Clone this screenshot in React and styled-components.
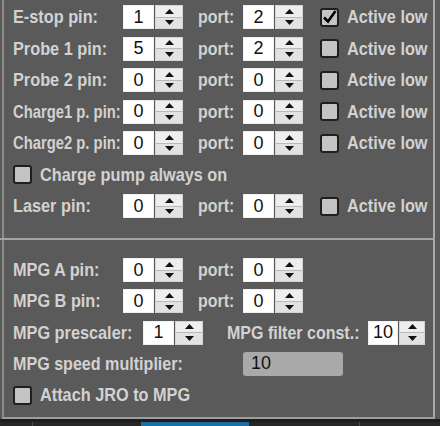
import React from 'react';
import styled, { createGlobalStyle } from 'styled-components';

const Global = createGlobalStyle`
  html, body { margin: 0; padding: 0; background: #5a5a5a; }
  body { width: 440px; height: 426px; overflow: hidden; font-family: "Liberation Sans", Arial, sans-serif; }
`;

const Screen = styled.div`
  width: 440px;
  height: 426px;
  display: flex;
  flex-direction: column;
  background: #5a5a5a;
`;

const Panel = styled.div`
  margin-left: 2px;
  width: 429px;
  height: 417px;
  border-left: 2px solid #8c8c8c;
  border-right: 2px solid #a8a8a8;
  border-bottom: 2px solid #9e9e9e;
  display: flex;
  flex-direction: column;
`;

const Section = styled.div`
  display: flex;
  flex-direction: column;
  gap: ${p => p.$gap}px;
  padding: ${p => p.$top}px 0 0 9px;
  height: ${p => p.$h}px;
  box-sizing: border-box;
`;

const Separator = styled.div`
  height: 2px;
  background: #a4a4a4;
  margin-left: -4px;
`;

const Row = styled.div`
  display: grid;
  grid-template-columns: ${p => p.$cols};
  align-items: center;
  height: 24px;
`;

const Label = styled.span`
  display: inline-block;
  color: #d2d2d2;
  font-weight: bold;
  font-size: 18.5px;
  line-height: 24px;
  white-space: nowrap;
  transform: scaleX(${p => p.$sx || 0.88});
  transform-origin: left center;
`;

const Spin = styled.div`
  display: flex;
  gap: 1px;
  height: 24px;
`;

const SpinValue = styled.div`
  width: ${p => p.$w || 31}px;
  height: 24px;
  box-sizing: border-box;
  background: #ffffff;
  border: 1px solid #f0f0f0;
  color: #111;
  font-size: 18px;
  display: flex;
  align-items: center;
  justify-content: center;
`;

const SpinButtons = styled.div`
  width: ${p => p.$w || 28}px;
  height: 24px;
  box-sizing: border-box;
  display: flex;
  flex-direction: column;
  border: 1px solid #d4d4d4;
  background: #e6e6e6;
`;

const SpinBtn = styled.div`
  flex: 1;
  display: flex;
  align-items: center;
  justify-content: center;
  background: ${p => (p.$up ? '#eeeeee' : '#e2e2e2')};
  & + & { border-top: 1px solid #b9b9b9; }
`;

const CheckWrap = styled.div`
  display: flex;
  align-items: center;
  gap: 8px;
`;

const Box = styled.div`
  flex: 0 0 auto;
  width: 19px;
  height: 19px;
  box-sizing: border-box;
  border: 2px solid #1f1f1f;
  border-radius: 3px;
  background: #c4c4c4;
  display: flex;
  align-items: center;
  justify-content: center;
  overflow: visible;
`;

const Field = styled.div`
  width: 100px;
  height: 24px;
  box-sizing: border-box;
  background: #a9a9a9;
  border-radius: 3px;
  padding-left: 8px;
  color: #111;
  font-size: 18px;
  display: flex;
  align-items: center;
`;

const BottomBar = styled.div`
  height: 7px;
  display: flex;
  background: #1d1d1d;
  padding-top: 3px;
  box-sizing: border-box;
`;

const Tab = styled.div`
  width: ${p => p.$w}px;
  flex: ${p => (p.$w ? '0 0 auto' : '1')};
  background: ${p => (p.$active ? '#1b6fa5' : '#262626')};
  border-left: ${p => (p.$tick ? '1px solid #4a4a4a' : 'none')};
`;

const Up = () => (
  <svg width="9" height="5" viewBox="0 0 9 5"><path d="M0 5 L4.5 0 L9 5 Z" fill="#111" /></svg>
);
const Down = () => (
  <svg width="9" height="5" viewBox="0 0 9 5"><path d="M0 0 L4.5 5 L9 0 Z" fill="#111" /></svg>
);

const SpinBox = ({ value, w, bw }) => (
  <Spin>
    <SpinValue $w={w}>{value}</SpinValue>
    <SpinButtons $w={bw}>
      <SpinBtn $up><Up /></SpinBtn>
      <SpinBtn><Down /></SpinBtn>
    </SpinButtons>
  </Spin>
);

const Check = ({ checked, label, sx }) => (
  <CheckWrap>
    <Box>
      {checked && (
        <svg width="15" height="15" viewBox="0 0 15 15" style={{ overflow: 'visible' }}>
          <path d="M2 7.5 L6 11.5 L13.5 1" fill="none" stroke="#000" strokeWidth="2.6" />
        </svg>
      )}
    </Box>
    <Label $sx={sx}>{label}</Label>
  </CheckWrap>
);

const PIN_COLS = '110px 75px 45px 77px auto';

const pinRows = [
  { label: 'E-stop pin:', pin: 1, port: 2, checked: true },
  { label: 'Probe 1 pin:', pin: 5, port: 2 },
  { label: 'Probe 2 pin:', pin: 0, port: 0 },
  { label: 'Charge1 p. pin:', pin: 0, port: 0, sx: 0.8 },
  { label: 'Charge2 p. pin:', pin: 0, port: 0, sx: 0.8 },
];

const PinRow = ({ label, pin, port, checked, sx, noCheck }) => (
  <Row $cols={PIN_COLS}>
    <Label $sx={sx}>{label}</Label>
    <SpinBox value={pin} />
    <Label $sx={0.86}>port:</Label>
    <SpinBox value={port} />
    {!noCheck && <Check checked={checked} label="Active low" sx={0.88} />}
  </Row>
);

export default function App() {
  return (
    <>
      <Global />
      <Screen>
        <Panel>
          <Section $top={5} $gap={7.5} $h={238}>
            {pinRows.map(r => <PinRow key={r.label} {...r} />)}
            <Row $cols="auto">
              <Check label="Charge pump always on" />
            </Row>
            <PinRow label="Laser pin:" pin={0} port={0} />
          </Section>
          <Separator />
          <Section $top={18} $gap={7.3} $h={177}>
            <PinRow label="MPG A pin:" pin={0} port={0} noCheck />
            <PinRow label="MPG B pin:" pin={0} port={0} noCheck />
            <Row $cols="130px 84px 141px auto">
              <Label>MPG prescaler:</Label>
              <SpinBox value={1} />
              <Label $sx={0.865}>MPG filter const.:</Label>
              <SpinBox value={10} w={30} bw={26} />
            </Row>
            <Row $cols="230px auto">
              <Label $sx={0.87}>MPG speed multiplier:</Label>
              <Field>10</Field>
            </Row>
            <Row $cols="auto">
              <Check label="Attach JRO to MPG" />
            </Row>
          </Section>
        </Panel>
        <BottomBar>
          <Tab $w={32} />
          <Tab $w={108} $tick />
          <Tab $w={108} $active />
          <Tab $w={110} />
          <Tab $tick />
        </BottomBar>
      </Screen>
    </>
  );
}
